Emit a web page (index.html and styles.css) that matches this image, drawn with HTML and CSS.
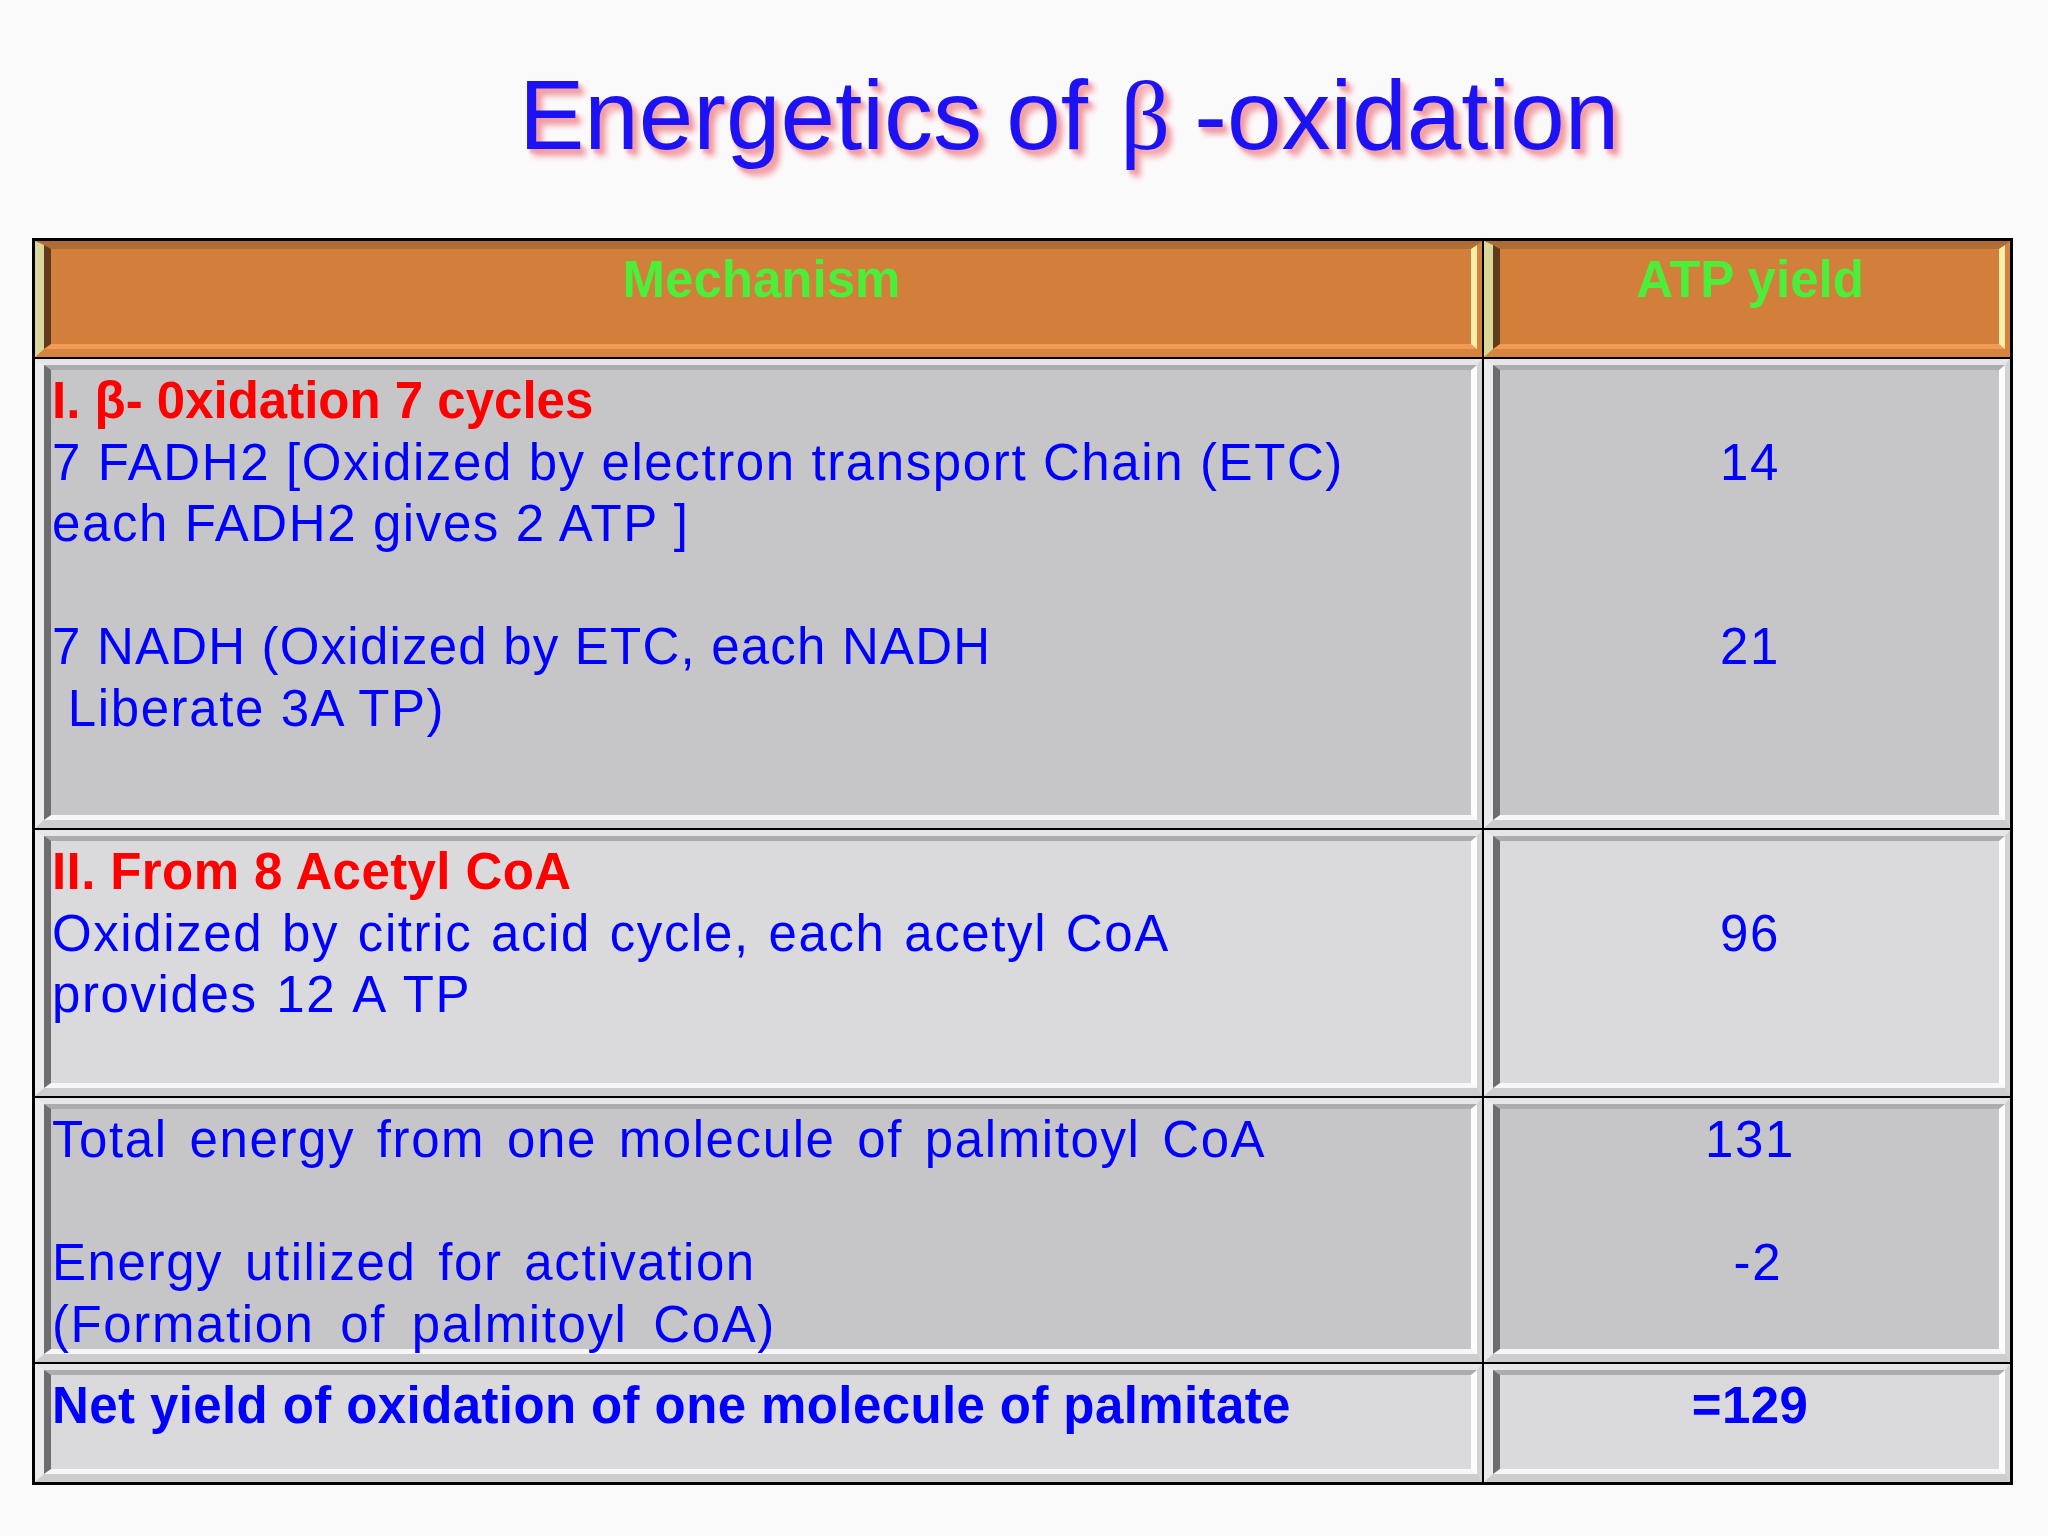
FILE: index.html
```html
<!DOCTYPE html>
<html lang="en">
<head>
<meta charset="utf-8">
<title>Energetics of β-oxidation</title>
<link rel="stylesheet" href="styles.css">
</head>
<body>
<main class="slide">
  <h1 class="title">Energetics of <span class="beta">β</span> -oxidation</h1>
  <div class="table">
    <div class="cell head"><div class="panel center"><div class="line">Mechanism</div></div></div>
    <div class="cell head"><div class="panel center"><div class="line">ATP yield</div></div></div>

    <div class="cell dark"><div class="panel">
      <div class="line red">I. β- 0xidation 7 cycles</div>
      <div class="line">7 FADH2 [Oxidized by electron transport Chain (ETC)</div>
      <div class="line">each FADH2 gives 2 ATP ]</div>
      <div class="line blank"></div>
      <div class="line tight">7 NADH (Oxidized by ETC, each NADH</div>
      <div class="line"> Liberate 3A TP)</div>
    </div></div>
    <div class="cell dark"><div class="panel center">
      <div class="line blank"></div>
      <div class="line">14</div>
      <div class="line blank"></div>
      <div class="line blank"></div>
      <div class="line">21</div>
    </div></div>

    <div class="cell light"><div class="panel">
      <div class="line red wide-red">II. From 8 Acetyl CoA</div>
      <div class="line mid">Oxidized by citric acid cycle, each acetyl CoA</div>
      <div class="line mid">provides 12 A TP</div>
    </div></div>
    <div class="cell light"><div class="panel center">
      <div class="line blank"></div>
      <div class="line">96</div>
    </div></div>

    <div class="cell dark"><div class="panel">
      <div class="line wide">Total energy from one molecule of palmitoyl CoA</div>
      <div class="line blank"></div>
      <div class="line wide">Energy utilized for activation</div>
      <div class="line wider">(Formation of palmitoyl CoA)</div>
    </div></div>
    <div class="cell dark"><div class="panel center">
      <div class="line">131</div>
      <div class="line blank"></div>
      <div class="line"> -2</div>
    </div></div>

    <div class="cell light"><div class="panel">
      <div class="line bold">Net yield of oxidation of one molecule of palmitate</div>
    </div></div>
    <div class="cell light"><div class="panel center">
      <div class="line bold">=129</div>
    </div></div>
  </div>
</main>
</body>
</html>
```

FILE: styles.css
```css
* {
  box-sizing: border-box;
  margin: 0;
  padding: 0;
}

html,
body {
  background: #fbfafb;
}

body {
  width: 2048px;
  height: 1536px;
  overflow: hidden;
  font-family: "Liberation Sans", Arial, sans-serif;
}

.slide {
  padding: 67px 0 0 32px;
}

.title {
  font-size: 98px;
  font-weight: normal;
  line-height: 96px;
  color: #1c12f4;
  text-shadow: 6px 7px 6px #f09aa0, 3px 4px 3px #f4b0b4;
  padding-left: 487px;
  margin-bottom: 74px;
  white-space: pre;
  word-spacing: -3px;
}

.beta {
  font-family: "Liberation Serif", "DejaVu Serif", serif;
  margin-left: 8px;
}

.table {
  width: 1981px;
  display: grid;
  grid-template-columns: 1447px 526px;
  grid-template-rows: 116px 469px 266px 264px 118px;
  gap: 2px;
  border: 3px solid #000;
  background: #000;
}

.cell {
  border-style: solid;
  border-width: 6px 5px 8px 9px;
  border-color: #e6e6e8 #d3d3d5 #cdcdcf #ececee;
}

.panel {
  height: 100%;
  border-style: solid;
  border-width: 5px 6px 5px 7px;
  border-color: #acacae #fdfdfd #f7f7f9 #6d6d6f;
  padding-left: 1px;
}

.dark .panel {
  background: #c6c5c8;
}

.light .panel {
  background: #dadadc;
}

.head {
  border-top-width: 4px;
  border-color: #ad6b36 #d4843f #d6853f #d9d79a;
}

.head .panel {
  border-top-width: 4px;
  background: #d27f3c;
  border-color: #b06d38 #faf0aa #f39b55 #5f3b1c;
}

.center {
  text-align: center;
}

.line {
  font-size: 51px;
  line-height: 61.5px;
  letter-spacing: 1.6px;
  color: #0000ff;
  white-space: pre;
}

.blank {
  height: 61.5px;
}

.tight {
  letter-spacing: 1.2px;
}

.mid {
  word-spacing: 3px;
}

.wide {
  word-spacing: 6px;
}

.wider {
  word-spacing: 10px;
}

.red {
  color: #ff0000;
  font-weight: bold;
  letter-spacing: 0;
}

.wide-red {
  letter-spacing: 0.4px;
}

.bold {
  font-weight: bold;
  letter-spacing: 0.4px;
}

.head .line {
  color: #4cee3a;
  font-weight: bold;
  letter-spacing: 0;
}
```
